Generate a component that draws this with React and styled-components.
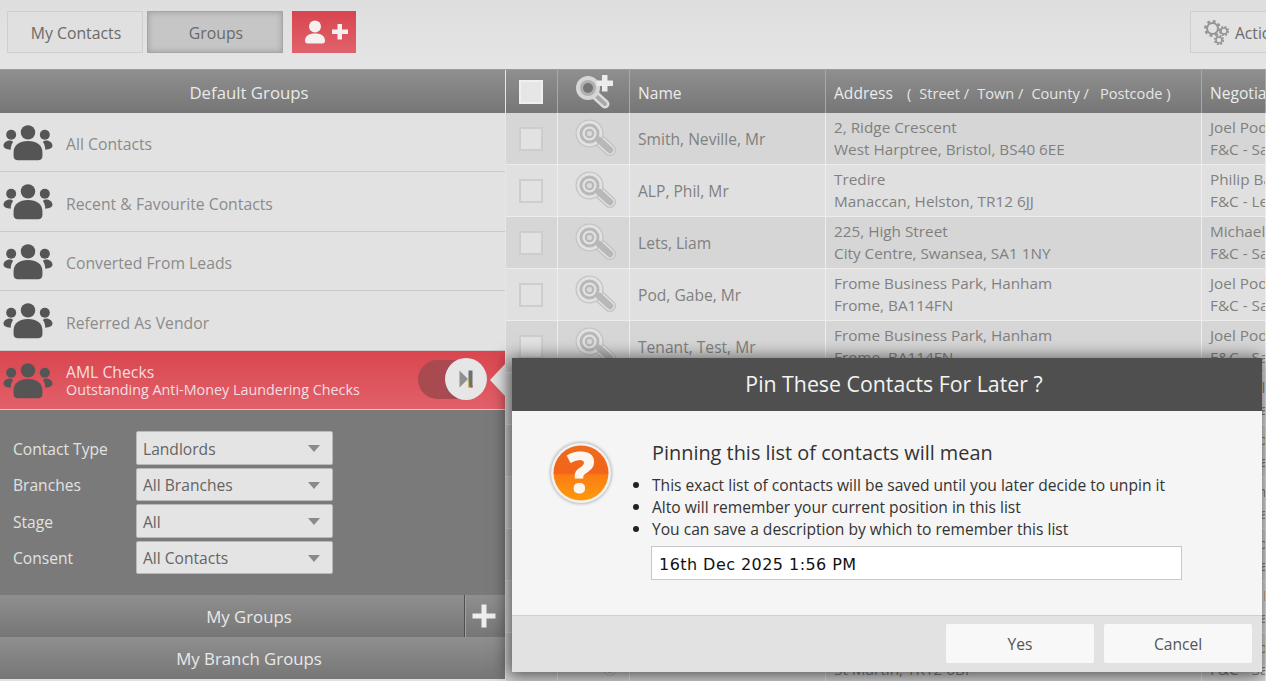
import React from "react";
import styled, { createGlobalStyle } from "styled-components";

const Global = createGlobalStyle`
  html, body { margin: 0; padding: 0; height: 100%; overflow: hidden; background: #e0e0e0; }
  * { box-sizing: border-box; }
  body { font-family: "Open Sans", "Noto Sans", "Liberation Sans", sans-serif; }
`;

const Page = styled.div`
  position: relative;
  width: 1266px;
  height: 681px;
  overflow: hidden;
  display: flex;
  flex-direction: column;
  font-size: 15.6px;
`;

const Toolbar = styled.div`
  height: 70px;
  flex: none;
  display: flex;
  align-items: flex-start;
  padding: 11px 0 0 7px;
  background: linear-gradient(#dedede, #e5e5e5);
  border-bottom: 1px solid #9c9c9c;
`;
const TabButton = styled.div`
  width: 136px;
  height: 42px;
  margin-right: ${(p) => p.$gap || 4}px;
  padding: 2px 0 0 2px;
  display: flex;
  align-items: center;
  justify-content: center;
  font-size: 15.8px;
  color: #6a6a6a;
  background: ${(p) => (p.$on ? "#c6c6c6" : "#e0e0e0")};
  border: 1px solid ${(p) => (p.$on ? "#a6a6a6" : "#cfcfcf")};
  box-shadow: ${(p) => (p.$on ? "inset 0 0 6px rgba(0,0,0,.22)" : "none")};
`;
const AddButton = styled.div`
  width: 64px;
  height: 42px;
  padding-left: 6px;
  display: flex;
  align-items: center;
  justify-content: center;
  background: linear-gradient(#d8454f, #e0626c);
`;
const ActionButton = styled.div`
  margin-left: auto;
  width: 76px;
  height: 42px;
  padding: 0 0 0 12px;
  display: flex;
  align-items: center;
  gap: 5px;
  overflow: hidden;
  white-space: nowrap;
  color: #6a6a6a;
  background: #e2e2e2;
  border: 1px solid #cfcfcf;
  border-right: 0;
`;
const ActionLabel = styled.span`
  flex: none;
  padding-top: 2px;
`;

const Main = styled.div`
  flex: 1;
  display: flex;
  min-height: 0;
`;
const Side = styled.div`
  width: 505px;
  flex: none;
  display: flex;
  flex-direction: column;
`;
const SideHead = styled.div`
  height: ${(p) => p.$h || 43}px;
  flex: none;
  padding: ${(p) => (p.$h ? 0 : 2)}px 7px 0 0;
  display: flex;
  align-items: center;
  justify-content: center;
  color: #e9e9e9;
  font-size: 16.8px;
  background: linear-gradient(#8f8f8f, #767676);
`;
const SideHeadSplit = styled.div`
  height: 42px;
  flex: none;
  display: flex;
  background: linear-gradient(#8f8f8f, #767676);
`;
const SideHeadTitle = styled.div`
  flex: 1;
  display: flex;
  align-items: center;
  justify-content: center;
  color: #e9e9e9;
  font-size: 16.8px;
  padding: 0 0 0 34px;
  border-right: 1px solid #4f4f4f;
`;
const PlusCell = styled.div`
  width: 40px;
  padding-right: 3px;
  display: flex;
  align-items: center;
  justify-content: center;
  border-left: 1px solid #a0a0a0;
`;
const GroupRow = styled.div`
  position: relative;
  height: ${(p) => p.$h}px;
  flex: none;
  display: flex;
  align-items: center;
  padding-left: 3px;
  gap: 13px;
  color: #8b8b8b;
  background: #e2e2e2;
  border-bottom: 1px solid #cacaca;
`;
const ActiveRow = styled(GroupRow)`
  color: #f3dfe0;
  background: linear-gradient(#d9464f, #e2606a);
  border-bottom: 1px solid #ecc4c6;
`;
const RowLabel = styled.div`
  padding-top: 4px;
  font-size: 15.75px;
  line-height: 18px;
`;
const RowText = styled.div`
  display: flex;
  flex-direction: column;
  padding-top: 1px;
`;
const RowTitle = styled.div`
  font-size: 15.75px;
  line-height: 18px;
`;
const RowSub = styled.div`
  line-height: 18px;
  font-size: 14.35px;
`;
const Toggle = styled.div`
  position: absolute;
  left: 418px;
  top: 9px;
  width: 69px;
  height: 39px;
  border-radius: 20px;
  background: #a94a51;
`;
const Knob = styled.div`
  position: absolute;
  right: 0;
  top: -2px;
  width: 42px;
  height: 42px;
  border-radius: 50%;
  background: #e6e6e6;
  display: flex;
  align-items: center;
  justify-content: center;
`;
const Notch = styled.div`
  position: absolute;
  right: 0;
  top: 13px;
  width: 15px;
  height: 32px;
  background: #e4e4e4;
  clip-path: polygon(100% 0, 100% 100%, 0 50%);
`;
const Filters = styled.div`
  height: 185px;
  flex: none;
  padding: 21px 0 0 13px;
  background: #7a7a7a;
  display: grid;
  grid-template-columns: 123px 197px;
  grid-auto-rows: 33.5px;
  row-gap: 3px;
  align-items: center;
  color: #e2e2e2;
`;
const FilterLabel = styled.span`
  padding-top: 2px;
`;
const SelectBox = styled.div`
  position: relative;
  height: 33.5px;
  display: flex;
  align-items: center;
  padding: 2px 0 0 6px;
  color: #646464;
  background: #e4e4e4;
  border: 1px solid #b9b9b9;
  border-radius: 2px;
`;
const Caret = styled.span`
  position: absolute;
  right: 12px;
  top: 13px;
  width: 0;
  height: 0;
  border-left: 6.5px solid transparent;
  border-right: 6.5px solid transparent;
  border-top: 7px solid #8a8a8a;
`;
const BottomGap = styled.div`
  flex: 1;
  background: #e0e0e0;
`;

const TableArea = styled.div`
  flex: 1;
  min-width: 0;
  border-left: 1px solid #e6e6e6;
  overflow: hidden;
`;
const COLS = "52px 72px 196px 376px 1fr";
const HeadRow = styled.div`
  height: 43px;
  display: grid;
  grid-template-columns: ${COLS};
  color: #ececec;
  background: linear-gradient(#8f8f8f, #767676);
`;
const HeadCell = styled.div`
  display: flex;
  align-items: center;
  justify-content: ${(p) => (p.$center ? "center" : "flex-start")};
  padding: ${(p) => (p.$center ? "0" : "2px 0 0 8px")};
  border-right: 1px solid #a9a9a9;
  white-space: nowrap;
  overflow: hidden;
`;
const HeadPart = styled.span`
  font-size: 14.6px;
  color: #e6e6e6;
  margin-left: ${(p) => p.$m}px;
`;
const Row = styled.div`
  height: 52px;
  display: grid;
  grid-template-columns: ${COLS};
  color: #808080;
  background: ${(p) => (p.$alt ? "#e0e0e0" : "#d6d6d6")};
  border-bottom: 1px solid #ededed;
`;
const Cell = styled.div`
  display: flex;
  flex-direction: column;
  align-items: ${(p) => (p.$center ? "center" : "flex-start")};
  justify-content: center;
  padding: 0 0 ${(p) => (p.$size ? 2 : 0)}px ${(p) => (p.$center ? 0 : 8)}px;
  line-height: 22px;
  font-size: ${(p) => p.$size || "15.6px"};
  border-right: 1px solid #ededed;
  white-space: nowrap;
  overflow: hidden;
`;
const CheckBox = styled.span`
  display: block;
  width: 24px;
  height: 24px;
  margin-right: 2px;
  background: ${(p) => (p.$head ? "#e6e6e6" : "#e2e2e2")};
  border: 2px solid ${(p) => (p.$head ? "#f0f0f0" : "#cdcdcd")};
`;

const Dialog = styled.div`
  position: absolute;
  left: 512px;
  top: 358px;
  width: 750px;
  height: 314px;
  display: flex;
  flex-direction: column;
  box-shadow: -2px 2px 16px 2px rgba(0, 0, 0, 0.62);
`;
const DialogTitle = styled.div`
  height: 53px;
  flex: none;
  padding: 0 0 2px 14px;
  display: flex;
  align-items: center;
  justify-content: center;
  background: #4f4f4f;
  color: #f4f4f4;
  font-size: 21.3px;
`;
const DialogBody = styled.div`
  flex: 1;
  display: flex;
  background: #f5f5f5;
  color: #333;
`;
const IconCol = styled.div`
  width: 140px;
  flex: none;
  padding: 29px 0 0 36px;
`;
const Content = styled.div`
  display: flex;
  flex-direction: column;
`;
const Heading = styled.div`
  font-size: 19.9px;
  line-height: 26px;
  margin-top: 29px;
`;
const Bullets = styled.ul`
  margin: 8px 0 0;
  padding: 0;
  list-style: none;
  font-size: 15.6px;
`;
const Bullet = styled.li`
  position: relative;
  line-height: 22px;
  white-space: nowrap;
  &::before {
    content: "";
    position: absolute;
    left: -19px;
    top: 8px;
    width: 6px;
    height: 6px;
    border-radius: 50%;
    background: #222;
  }
`;
const TextInput = styled.div`
  width: 531px;
  height: 34px;
  margin: 6px 0 0 -1px;
  padding: 3px 0 0 7px;
  display: flex;
  align-items: center;
  background: #fff;
  border: 1px solid #c8c8c8;
  color: #111;
  font-family: "DejaVu Sans", Verdana, sans-serif;
  font-size: 16px;
  letter-spacing: 0.45px;
`;
const DialogFoot = styled.div`
  height: 57px;
  flex: none;
  display: flex;
  justify-content: flex-end;
  gap: 10px;
  padding: 8px 10px 0 0;
  background: #e2e2e2;
  border-top: 1px solid #cfcfcf;
`;
const FootButton = styled.div`
  width: 148px;
  height: 39px;
  display: flex;
  align-items: center;
  justify-content: center;
  background: #f8f8f8;
  border-radius: 2px;
  color: #555;
`;

const PeopleIcon = () => (
  <svg width="50" height="37" viewBox="0 0 52 38" fill="#555" style={{ flex: "none" }}>
    <circle cx="26" cy="8.500" r="7.500" />
    <circle cx="8.500" cy="11" r="5.200" />
    <circle cx="43.500" cy="11" r="5.200" />
    <path d="M11 29c0-7 6-11.500 15-11.500S41 22 41 29v4c0 3-2 4.500-4.500 4.500h-21C13 37.500 11 36 11 33z" />
    <path d="M10.500 18.500c-1.500 2-2.300 4.500-2.500 8C4 26.500 0.500 25 0.500 22.500c0-3 3-5.500 6.500-5.500 1.300 0 2.500 .5 3.500 1.500z" />
    <path d="M41.500 18.500c1.500 2 2.300 4.500 2.500 8 4 0 7.500-1.500 7.500-4 0-3-3-5.500-6.500-5.500-1.300 0-2.500 .5-3.500 1.500z" />
  </svg>
);

const PersonPlus = () => (
  <svg width="46" height="24" viewBox="0 0 46 24" fill="#f6f0f0">
    <circle cx="11" cy="6.500" r="6" />
    <path d="M1 21c0-5 3.500-7.500 10-7.500S21 16 21 21c0 1.500-1 2.500-2.500 2.500h-15C2 23.500 1 22.500 1 21z" />
    <path d="M30 12h5.500V6.500h4.500V12h6v4.500h-6V22h-4.500v-5.500H30z" transform="translate(-2 -2.500)" />
  </svg>
);

const Gears = () => (
  <svg width="27" height="27" viewBox="0 0 27 27" fill="none" stroke="#959595" style={{ flex: "none" }}>
    <circle cx="9.500" cy="9.500" r="5.500" strokeWidth="2" />
    <circle cx="9.500" cy="9.500" r="7.300" strokeWidth="2.400" strokeDasharray="3 2.730" />
    <circle cx="21" cy="12" r="3" strokeWidth="1.500" />
    <circle cx="21" cy="12" r="4.300" strokeWidth="1.600" strokeDasharray="2 1.380" />
    <circle cx="16" cy="21" r="3" strokeWidth="1.500" />
    <circle cx="16" cy="21" r="4.300" strokeWidth="1.600" strokeDasharray="2 1.380" />
  </svg>
);

const Magnifier = () => (
  <svg width="42" height="40" viewBox="0 0 42 40" fill="none" style={{ margin: "0 0 2px 5px" }}>
    <path d="M24 22L35 32" stroke="#c2c2c2" strokeWidth="12" strokeLinecap="round" />
    <path d="M24 22L35 32" stroke="#e2e2e2" strokeWidth="9.500" strokeLinecap="round" />
    <circle cx="14.500" cy="15.500" r="14" fill="#c4c4c4" />
    <circle cx="14.500" cy="15.500" r="12.700" fill="#e2e2e2" />
    <path d="M24 22L35 32" stroke="#b8b8b8" strokeWidth="6.500" strokeLinecap="round" />
    <circle cx="14.500" cy="15.500" r="10" fill="#b8b8b8" />
    <circle cx="14.500" cy="15.500" r="7" fill="#e2e2e2" />
    <circle cx="14.500" cy="15.500" r="4.800" fill="#b9b9b9" />
    <circle cx="14.500" cy="15.500" r="2.600" fill="#dadada" />
  </svg>
);

const HeadMagnifier = () => (
  <svg width="40" height="36" viewBox="0 0 40 36" fill="none">
    <path d="M20 20L31 30" stroke="#dcdcdc" strokeWidth="9" strokeLinecap="round" />
    <path d="M20 20L31 30" stroke="#a9a9a9" strokeWidth="4" strokeLinecap="round" />
    <circle cx="14" cy="14" r="12" fill="#d6d6d6" />
    <circle cx="14" cy="14" r="8" fill="#b0b0b0" />
    <circle cx="14" cy="14" r="5" fill="#747474" />
    <path d="M25 2h5.500v5.500H36V13h-5.500v5.500H25V13h-5.500V7.500H25z" fill="#ececec" transform="translate(3 -1)" />
  </svg>
);

const SkipIcon = () => (
  <svg width="14" height="18" viewBox="0 0 14 18">
    <path d="M0.500 0.500L9 9 0.500 17.500z" fill="#8f8f8f" />
    <path d="M9.500 0.500h4v17h-4z" fill="#6f6f6f" />
    <path d="M9 10l1 7.500" stroke="#d9c23c" strokeWidth="1" />
    <path d="M12 15h1.500v2.500H12z" fill="#d9414c" />
  </svg>
);

const BigPlus = () => (
  <svg width="24" height="24" viewBox="0 0 24 24">
    <path d="M9.500 0.500h5v9h9v5h-9v9h-5v-9h-9v-5h9z" fill="#eeeeee" />
  </svg>
);

const QuestionIcon = () => (
  <svg width="66" height="66" viewBox="0 0 66 66">
    <defs>
      <linearGradient id="orange" x1="0" y1="0" x2="0" y2="1">
        <stop offset="0" stopColor="#ee6c1e" />
        <stop offset="0.5" stopColor="#f2641a" />
        <stop offset="0.54" stopColor="#fb7d14" />
        <stop offset="1" stopColor="#ff9a0c" />
      </linearGradient>
      <filter id="soft" x="-20%" y="-20%" width="140%" height="140%">
        <feGaussianBlur stdDeviation="1.600" />
      </filter>
    </defs>
    <circle cx="33" cy="33" r="31" fill="#8d8d8d" opacity="0.6" filter="url(#soft)" />
    <circle cx="33" cy="33" r="30" fill="#f2f2f2" />
    <circle cx="33" cy="33" r="27.500" fill="url(#orange)" />
    <text x="33" y="53" textAnchor="middle" fontFamily="Open Sans, sans-serif" fontWeight="800" fontSize="56" fill="#fbf6f0">?</text>
  </svg>
);

const rows = [
  { n: "Smith, Neville, Mr", a: ["2, Ridge Crescent", "West Harptree, Bristol, BS40 6EE"], g: ["Joel Podmore", "F&C - Sales"] },
  { n: "ALP, Phil, Mr", a: ["Tredire", "Manaccan, Helston, TR12 6JJ"], g: ["Philip Baker", "F&C - Lettings"] },
  { n: "Lets, Liam", a: ["225, High Street", "City Centre, Swansea, SA1 1NY"], g: ["Michael Lee", "F&C - Sales"] },
  { n: "Pod, Gabe, Mr", a: ["Frome Business Park, Hanham", "Frome, BA114FN"], g: ["Joel Podmore", "F&C - Sales"] },
  { n: "Tenant, Test, Mr", a: ["Frome Business Park, Hanham", "Frome, BA114FN"], g: ["Joel Podmore", "F&C - Sales"] },
  { n: "Hart, Simon", a: ["14, Market Street", "Penzance, TR18 2LD"], g: ["Michael Lee", "F&C - Sales"] },
  { n: "Jones, Amy", a: ["7, Church Road", "Bath, BA1 5NT"], g: ["Joel Podmore", "F&C - Sales"] },
  { n: "Hill, Owen", a: ["3, Station Road", "Truro, TR1 3HH"], g: ["Hannah Cole", "F&C - Sales"] },
  { n: "Ward, Kate", a: ["21, Mill Lane", "Frome, BA11 1AB"], g: ["Joel Podmore", "F&C - Sales"] },
  { n: "Bell, Carl", a: ["9, West Street", "Helston, TR13 8EX"], g: ["Wendy Marsh", "F&C - Sales"] },
  { n: "Trevor, Ann", a: ["Rose Cottage", "St Martin, TR12 6BP"], g: ["Joel Podmore", "F&C - Sales"] },
];

const groups = [
  { t: "All Contacts", h: 59 },
  { t: "Recent & Favourite Contacts", h: 60 },
  { t: "Converted From Leads", h: 59 },
  { t: "Referred As Vendor", h: 60 },
];

const filters = [
  ["Contact Type", "Landlords"],
  ["Branches", "All Branches"],
  ["Stage", "All"],
  ["Consent", "All Contacts"],
];

export default function App() {
  return (
    <Page>
      <Global />
      <Toolbar>
        <TabButton>My Contacts</TabButton>
        <TabButton $on $gap={9}>Groups</TabButton>
        <AddButton><PersonPlus /></AddButton>
        <ActionButton><Gears /><ActionLabel>Actions</ActionLabel></ActionButton>
      </Toolbar>
      <Main>
        <Side>
          <SideHead>Default Groups</SideHead>
          {groups.map((g) => (
            <GroupRow key={g.t} $h={g.h}>
              <PeopleIcon />
              <RowLabel>{g.t}</RowLabel>
            </GroupRow>
          ))}
          <ActiveRow $h={59}>
            <PeopleIcon />
            <RowText>
              <RowTitle>AML Checks</RowTitle>
              <RowSub>Outstanding Anti-Money Laundering Checks</RowSub>
            </RowText>
            <Toggle>
              <Knob><SkipIcon /></Knob>
            </Toggle>
            <Notch />
          </ActiveRow>
          <Filters>
            {filters.map(([label, value]) => (
              <React.Fragment key={label}>
                <FilterLabel>{label}</FilterLabel>
                <SelectBox>{value}<Caret /></SelectBox>
              </React.Fragment>
            ))}
          </Filters>
          <SideHeadSplit>
            <SideHeadTitle>My Groups</SideHeadTitle>
            <PlusCell><BigPlus /></PlusCell>
          </SideHeadSplit>
          <SideHead $h={42}>My Branch Groups</SideHead>
          <BottomGap />
        </Side>
        <TableArea>
          <HeadRow>
            <HeadCell $center><CheckBox $head /></HeadCell>
            <HeadCell $center><HeadMagnifier /></HeadCell>
            <HeadCell>Name</HeadCell>
            <HeadCell>
              Address
              <HeadPart $m={14}>(</HeadPart>
              <HeadPart $m={8}>Street /</HeadPart>
              <HeadPart $m={8}>Town /</HeadPart>
              <HeadPart $m={8}>County /</HeadPart>
              <HeadPart $m={11}>Postcode )</HeadPart>
            </HeadCell>
            <HeadCell>Negotiator</HeadCell>
          </HeadRow>
          {rows.map((r, i) => (
            <Row key={r.n} $alt={i % 2 === 1}>
              <Cell $center><CheckBox /></Cell>
              <Cell $center><Magnifier /></Cell>
              <Cell>{r.n}</Cell>
              <Cell $size="15.3px">{r.a.map((l) => <span key={l}>{l}</span>)}</Cell>
              <Cell $size="15.3px">{r.g.map((l) => <span key={l}>{l}</span>)}</Cell>
            </Row>
          ))}
        </TableArea>
      </Main>
      <Dialog>
        <DialogTitle>Pin These Contacts For Later ?</DialogTitle>
        <DialogBody>
          <IconCol><QuestionIcon /></IconCol>
          <Content>
            <Heading>Pinning this list of contacts will mean</Heading>
            <Bullets>
              <Bullet>This exact list of contacts will be saved until you later decide to unpin it</Bullet>
              <Bullet>Alto will remember your current position in this list</Bullet>
              <Bullet>You can save a description by which to remember this list</Bullet>
            </Bullets>
            <TextInput>16th Dec 2025 1:56 PM</TextInput>
          </Content>
        </DialogBody>
        <DialogFoot>
          <FootButton>Yes</FootButton>
          <FootButton>Cancel</FootButton>
        </DialogFoot>
      </Dialog>
    </Page>
  );
}
